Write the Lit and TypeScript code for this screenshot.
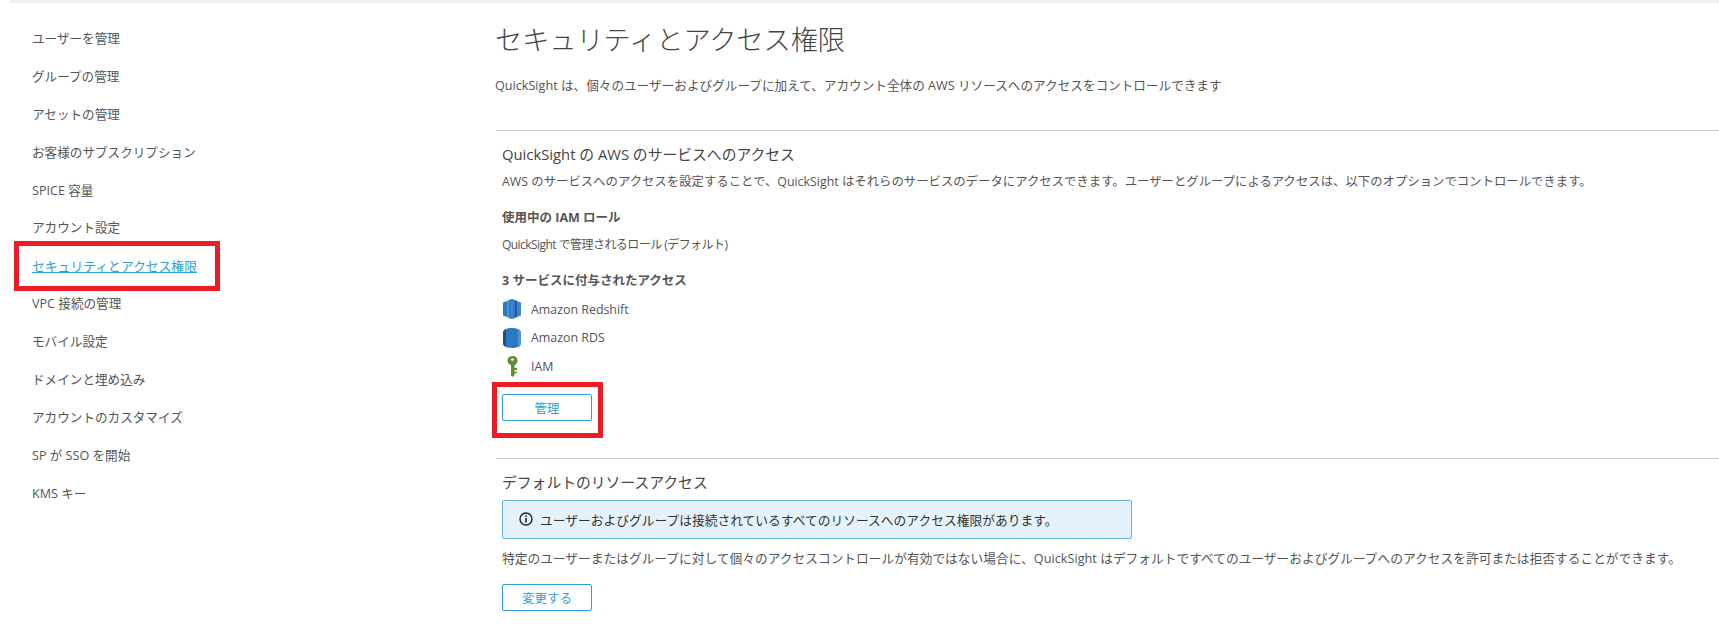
import { LitElement, html, css } from "lit";
import { customElement } from "lit/decorators.js";

const NAV = [
  "ユーザーを管理", "グループの管理", "アセットの管理", "お客様のサブスクリプション", "SPICE 容量", "アカウント設定",
  "セキュリティとアクセス権限", "VPC 接続の管理", "モバイル設定", "ドメインと埋め込み", "アカウントのカスタマイズ", "SP が SSO を開始", "KMS キー",
];

@customElement("app-root")
export class AppRoot extends LitElement {
  static styles = css`
    :host { display: block; width: 1719px; height: 629px; overflow: hidden; position: relative; background: #fff;
      font-family: "Open Sans", "Noto Sans CJK JP", sans-serif; color: #555; font-size: 12.6px; }
    * { box-sizing: border-box; }
    .top { height: 3px; margin-left: 10px; background: #f0f0f0; }
    .layout { display: flex; }
    nav { width: 495px; padding: 17px 0 0 32px; display: flex; flex-direction: column; flex: none; }
    nav a { height: 37.9px; line-height: 38px; color: #555; }
    nav a.active { color: #2a9fd6; text-decoration: underline; font-size: 12.8px; }
    main { flex: 1; min-width: 0; }
    h1 { margin: 19px 0 0; font-size: 27.25px; font-weight: 300; line-height: 36px; color: #444; letter-spacing: -0.1px; }
    .lead { margin: 17px 0 0; line-height: 20px; font-size: 12.64px; white-space: nowrap; }
    section { margin: 35px 0 0 1px; border-top: 1px solid #ccc; padding-left: 6px; }
    h2 { margin: 11px 0 0; font-size: 14.8px; font-weight: 400; line-height: 24px; color: #444; }
    p { margin: 0; white-space: nowrap; font-size: 12.39px; line-height: 20px; }
    .desc { margin-top: 6px; }
    .label { font-weight: 700; color: #555; }
    .l1 { margin-top: 16px; font-size: 12.5px; }
    .l2 { margin-top: 7px; letter-spacing: -0.55px; font-size: 12px; }
    .l3 { margin-top: 16px; font-size: 12.5px; }
    .svc { display: flex; align-items: center; gap: 9px; height: 28.5px; font-size: 12.4px; }
    .svc svg { width: 20px; height: 22px; flex: none; }
    button { display: block; width: 90px; height: 27px; padding: 0; background: #fff; border: 1px solid #2a9fd6; border-radius: 2px;
      color: #2a9fd6; font: inherit; font-size: 12.5px; }
    .svcs { margin-top: 4px; }
    .manage { margin-top: 13px; }
    section.second { margin-top: 37px; }
    .second h2 { margin-top: 11px; }
    .alert { margin-top: 6px; width: 630px; height: 39px; display: flex; align-items: center; gap: 7px; padding-left: 16px;
      border: 1px solid #5fb4e0; border-radius: 2px; background: #e6f2f9; color: #333; font-size: 12.75px; }
    .alert svg { width: 14px; height: 14px; flex: none; }
    .after { margin-top: 9px; font-size: 12.72px; }
    .change { margin-top: 16px; }
    .mark { position: absolute; border: 5px solid #ed1c24; }
    .m1 { left: 14px; top: 241px; width: 206px; height: 50px; }
    .m2 { left: 492px; top: 382px; width: 111px; height: 56px; }
  `;

  render() {
    return html`
      <div class="top"></div>
      <div class="layout">
        <nav>${NAV.map((t, i) => html`<a class=${i === 6 ? "active" : ""}>${t}</a>`)}</nav>
        <main>
          <h1>セキュリティとアクセス権限</h1>
          <p class="lead">QuickSight は、個々のユーザーおよびグループに加えて、アカウント全体の AWS リソースへのアクセスをコントロールできます</p>
          <section>
            <h2>QuickSight の AWS のサービスへのアクセス</h2>
            <p class="desc">AWS のサービスへのアクセスを設定することで、QuickSight はそれらのサービスのデータにアクセスできます。ユーザーとグループによるアクセスは、以下のオプションでコントロールできます。</p>
            <p class="label l1">使用中の IAM ロール</p>
            <p class="l2">QuickSight で管理されるロール (デフォルト)</p>
            <p class="label l3">3 サービスに付与されたアクセス</p>
            <div class="svcs">
              <div class="svc">
                <svg viewBox="0 0 20 22">
                  <path d="M1 4.500 L5 3 V19 L1 17.500Z" fill="#2f78c4"/>
                  <path d="M5 3 L7 2 V20 L5 19Z" fill="#4f93d6"/>
                  <path d="M7 2 C8 1 12 1 13 2 V20 C12 21 8 21 7 20Z" fill="#2f78c4"/>
                  <path d="M9 1.300 H11 V20.700 H9Z" fill="#4289d0"/>
                  <path d="M13 2 L15 3 V19 L13 20Z" fill="#1f5fa6"/>
                  <path d="M15 3 L19 4.500 V17.500 L15 19Z" fill="#3f86cf"/>
                </svg>Amazon Redshift</div>
              <div class="svc">
                <svg viewBox="0 0 20 22">
                  <path d="M1 6 C1 2.500 5 1 10 1 C15 1 19 2.500 19 6 V16 C19 19.500 15 21 10 21 C5 21 1 19.500 1 16Z" fill="#2f78c4"/>
                  <path d="M1 6 C1 4 2.500 2.800 4 2.200 V19.800 C2.500 19.200 1 18 1 16Z" fill="#1d4f86"/>
                  <path d="M16 2.200 C17.500 2.800 19 4 19 6 V16 C19 18 17.500 19.200 16 19.800Z" fill="#4f93d6"/>
                </svg>Amazon RDS</div>
              <div class="svc">
                <svg viewBox="0 0 20 22">
                  <path d="M10.500 1 C13.500 1 15.500 3 15.500 5.500 C15.500 7.800 14 9.500 12.500 10 V13 H15 V15 H12.500 V16.500 H14.500 V18.500 H12.500 V20 L11 22 L9 20.500 V10 C7 9.500 5.500 7.800 5.500 5.500 C5.500 3 7.500 1 10.500 1Z" fill="#5f8c35"/>
                  <ellipse cx="10.500" cy="4.500" rx="1.600" ry="1.300" fill="#e8f0dc"/>
                </svg>IAM</div>
            </div>
            <button class="manage">管理</button>
          </section>
          <section class="second">
            <h2>デフォルトのリソースアクセス</h2>
            <div class="alert">
              <svg viewBox="0 0 14 14"><circle cx="7" cy="7" r="6" fill="none" stroke="#222" stroke-width="1.400"/><rect x="6.200" y="6" width="1.600" height="4.500" fill="#222"/><rect x="6.200" y="3.300" width="1.600" height="1.600" fill="#222"/></svg>
              ユーザーおよびグループは接続されているすべてのリソースへのアクセス権限があります。
            </div>
            <p class="after">特定のユーザーまたはグループに対して個々のアクセスコントロールが有効ではない場合に、QuickSight はデフォルトですべてのユーザーおよびグループへのアクセスを許可または拒否することができます。</p>
            <button class="change">変更する</button>
          </section>
        </main>
      </div>
      <div class="mark m1"></div>
      <div class="mark m2"></div>
    `;
  }
}
